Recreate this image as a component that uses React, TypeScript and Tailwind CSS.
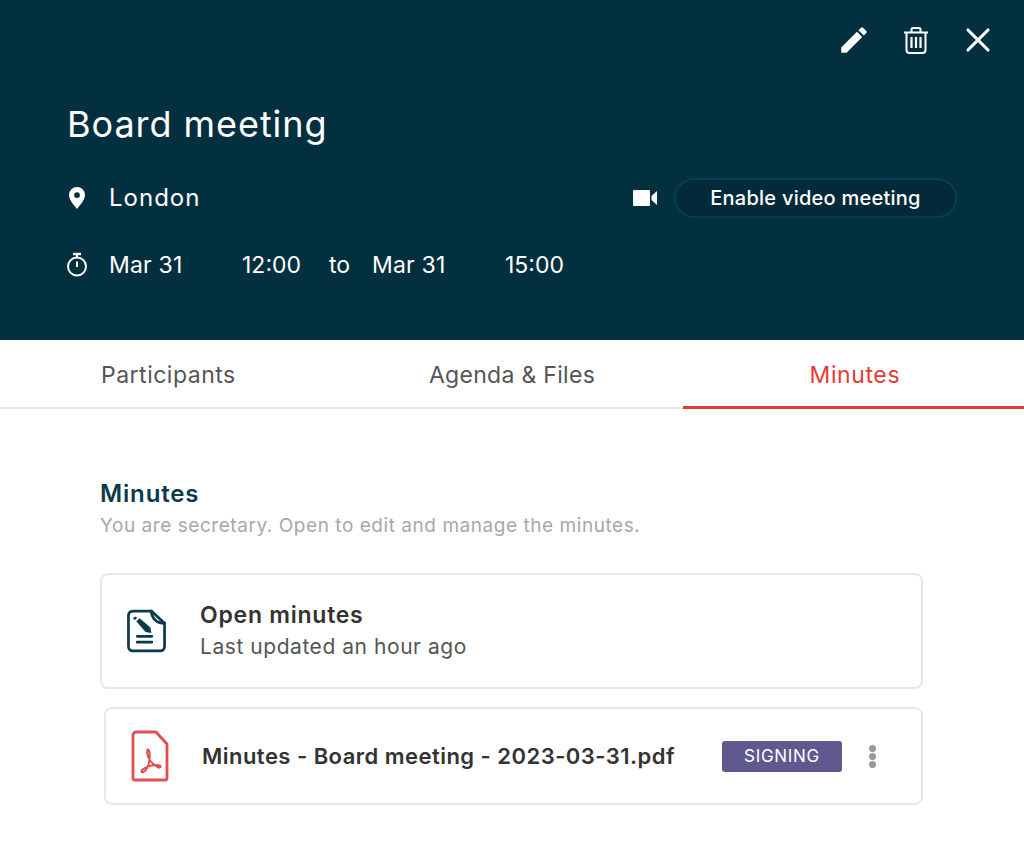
import React from "react";
import { X } from "lucide-react";

const Pencil = () => (
  <svg width="34" height="34" viewBox="0 0 24 24" fill="#fff"><path d="M3 17.25V21h3.75L17.81 9.94l-3.75-3.75L3 17.25zM20.71 7.04a1 1 0 0 0 0-1.41l-2.34-2.34a1 1 0 0 0-1.41 0l-1.83 1.83 3.75 3.75 1.83-1.83z" /></svg>
);
const Trash = () => (
  <svg width="26" height="28" viewBox="0 0 26 28" fill="none" stroke="#fff" strokeWidth="2"><path d="M1 6.500h24" /><path d="M8.500 6V3.500A1.500 1.500 0 0 1 10 2h6a1.500 1.500 0 0 1 1.500 1.500V6" /><path d="M3.500 7v17a3 3 0 0 0 3 3h13a3 3 0 0 0 3-3V7" /><path d="M8.500 11v11M13 11v11M17.500 11v11" strokeWidth="2.200" /></svg>
);
const Pin = () => (
  <svg width="18" height="24" viewBox="0 0 18 24" fill="#fff"><path fillRule="evenodd" d="M9 1a8 8 0 0 0-8 8c0 5 5 10 8 14 3-4 8-9 8-14a8 8 0 0 0-8-8zm0 5.200a2.900 2.900 0 1 1 0 5.800 2.900 2.900 0 0 1 0-5.800z" /></svg>
);
const Timer = () => (
  <svg width="22" height="26" viewBox="0 0 22 26" fill="none" stroke="#fff" strokeWidth="2"><path d="M7 2h8" strokeWidth="2.400" /><path d="M11 3v2" /><circle cx="11" cy="14.500" r="9" /><path d="M11 9.500v5.500" /></svg>
);
const Video = () => (
  <svg width="26" height="18" viewBox="0 0 26 18" fill="#fff"><rect x="1" y="1" width="17" height="16" rx="1" /><path d="M19.500 7 25 2v14l-5.500-5z" /></svg>
);
const Doc = () => (
  <svg width="39" height="44" viewBox="0 0 40 44" fill="none" stroke="#0b3a4a" strokeWidth="2.800" strokeLinecap="round" strokeLinejoin="round"><path d="M25 1.500H6A4.500 4.500 0 0 0 1.500 6v32A4.500 4.500 0 0 0 6 42.500h28a4.500 4.500 0 0 0 4.500-4.500V14z" /><path d="M25 1.500c0 7 5 12.500 13.500 12.500" /><path d="M10.500 27.500h15M10.500 33.500h15" /><path d="M6 9l2.500-2 2 1.700-2.500 2zM9.500 12l3.500-3 11 9.500 1 5.500-6-1z" fill="#0b3a4a" stroke="none" /></svg>
);
const Pdf = () => (
  <svg width="38" height="52" viewBox="0 0 38 52" fill="none" stroke="#e04f4f" strokeLinejoin="round"><path strokeWidth="2.800" d="M5 2h20l11 12v34a2 2 0 0 1-2 2H4a2 2 0 0 1-2-2V5a3 3 0 0 1 3-3z" /><path strokeWidth="2" d="M16.500 20c-1 3 1 8 3 11 2 3 5 5 8 6.500 2 .5 3-1 1-2-4-1.500-12 0-17 4-2 2-1 3.500 1 2.500 4-2 7-10 6-20-.5-3-2-3-2-2z" /></svg>
);

export default function App() {
  return (
    <div className="w-[1024px] h-[852px] bg-white overflow-hidden font-['Inter',sans-serif]">
      <header className="h-[340px] bg-[#03303f] text-white flex flex-col">
        <div className="flex justify-end items-center gap-[32px] pr-[26px] h-[80px]">
          <Pencil />
          <Trash />
          <div className="-ml-[3px]"><X size={40} strokeWidth={1.900} color="#fff" /></div>
        </div>
        <h1 className="mt-[20px] ml-[67px] text-[36px] leading-[48px] font-normal tracking-[0.95px]">Board meeting</h1>
        <div className="mt-[30px] ml-[68px] mr-[67px] flex items-center justify-between h-[40px]">
          <div className="flex items-center">
            <span className="w-[41px]"><Pin /></span>
            <span className="text-[24px] tracking-[1px]">London</span>
          </div>
          <div className="flex items-center gap-[16px]">
            <Video />
            <button className="w-[283px] h-[40px] pb-[1px] rounded-full border-2 border-[#0a3d4e] bg-[#032a38] text-white text-[20px] leading-[28px] font-medium tracking-[0.25px]">Enable video meeting</button>
          </div>
        </div>
        <div className="mt-[27px] ml-[66px] flex items-center text-[23px] h-[40px]">
          <span className="w-[43px]"><Timer /></span>
          <span className="w-[133px] tracking-[0.2px]">Mar 31</span>
          <span className="w-[87px]">12:00</span>
          <span className="w-[43px]">to</span>
          <span className="w-[133px] tracking-[0.2px]">Mar 31</span>
          <span>15:00</span>
        </div>
      </header>

      <nav className="grid grid-cols-3 h-[69px] border-b-2 border-[#e8e8e8] text-[23px] text-[#555]">
        <div className="flex items-center pl-[101px] pt-[4px] tracking-[0.5px]">Participants</div>
        <div className="flex items-center justify-center pt-[4px] tracking-[0.3px]">Agenda &amp; Files</div>
        <div className="flex items-center justify-center pt-[4px] pl-[3px] -mb-[2px] h-[69px] border-b-[3px] border-[#e63a32] text-[#e63a32] tracking-[0.6px]">Minutes</div>
      </nav>

      <section className="pl-[100px] pr-[101px] pt-[70px]">
        <h2 className="text-[24px] leading-[30px] font-semibold text-[#0b3a4a] tracking-[0.85px]">Minutes</h2>
        <p className="mt-[3px] text-[19px] leading-[28px] text-[#a8a8a8] tracking-[0.55px]">You are secretary. Open to edit and manage the minutes.</p>

        <div className="mt-[33px] h-[116px] flex items-center rounded-[8px] border-2 border-[#e8e8e2] pl-[25px]">
          <Doc />
          <div className="ml-[34px]">
            <div className="text-[23px] leading-[32px] font-semibold text-[#333] tracking-[0.75px]">Open minutes</div>
            <div className="text-[21px] leading-[32px] text-[#555] tracking-[0.55px]">Last updated an hour ago</div>
          </div>
        </div>

        <div className="mt-[18px] ml-[4px] h-[98px] flex items-center rounded-[8px] border-2 border-[#e8e8e2] pl-[25px] pr-[45px]">
          <Pdf />
          <div className="ml-[33px] text-[22px] font-semibold text-[#333] tracking-[0.47px]">Minutes - Board meeting - 2023-03-31.pdf</div>
          <div className="ml-auto flex items-center gap-[27px]">
            <span className="w-[120px] h-[31px] pt-[1px] flex items-center justify-center rounded-[3px] bg-[#5f598f] text-white text-[17px] tracking-[0.7px]">SIGNING</span>
            <span className="flex flex-col gap-[1px]">
              <i className="block w-[7px] h-[7px] rounded-full bg-[#999]" />
              <i className="block w-[7px] h-[7px] rounded-full bg-[#999]" />
              <i className="block w-[7px] h-[7px] rounded-full bg-[#999]" />
            </span>
          </div>
        </div>
      </section>
    </div>
  );
}
